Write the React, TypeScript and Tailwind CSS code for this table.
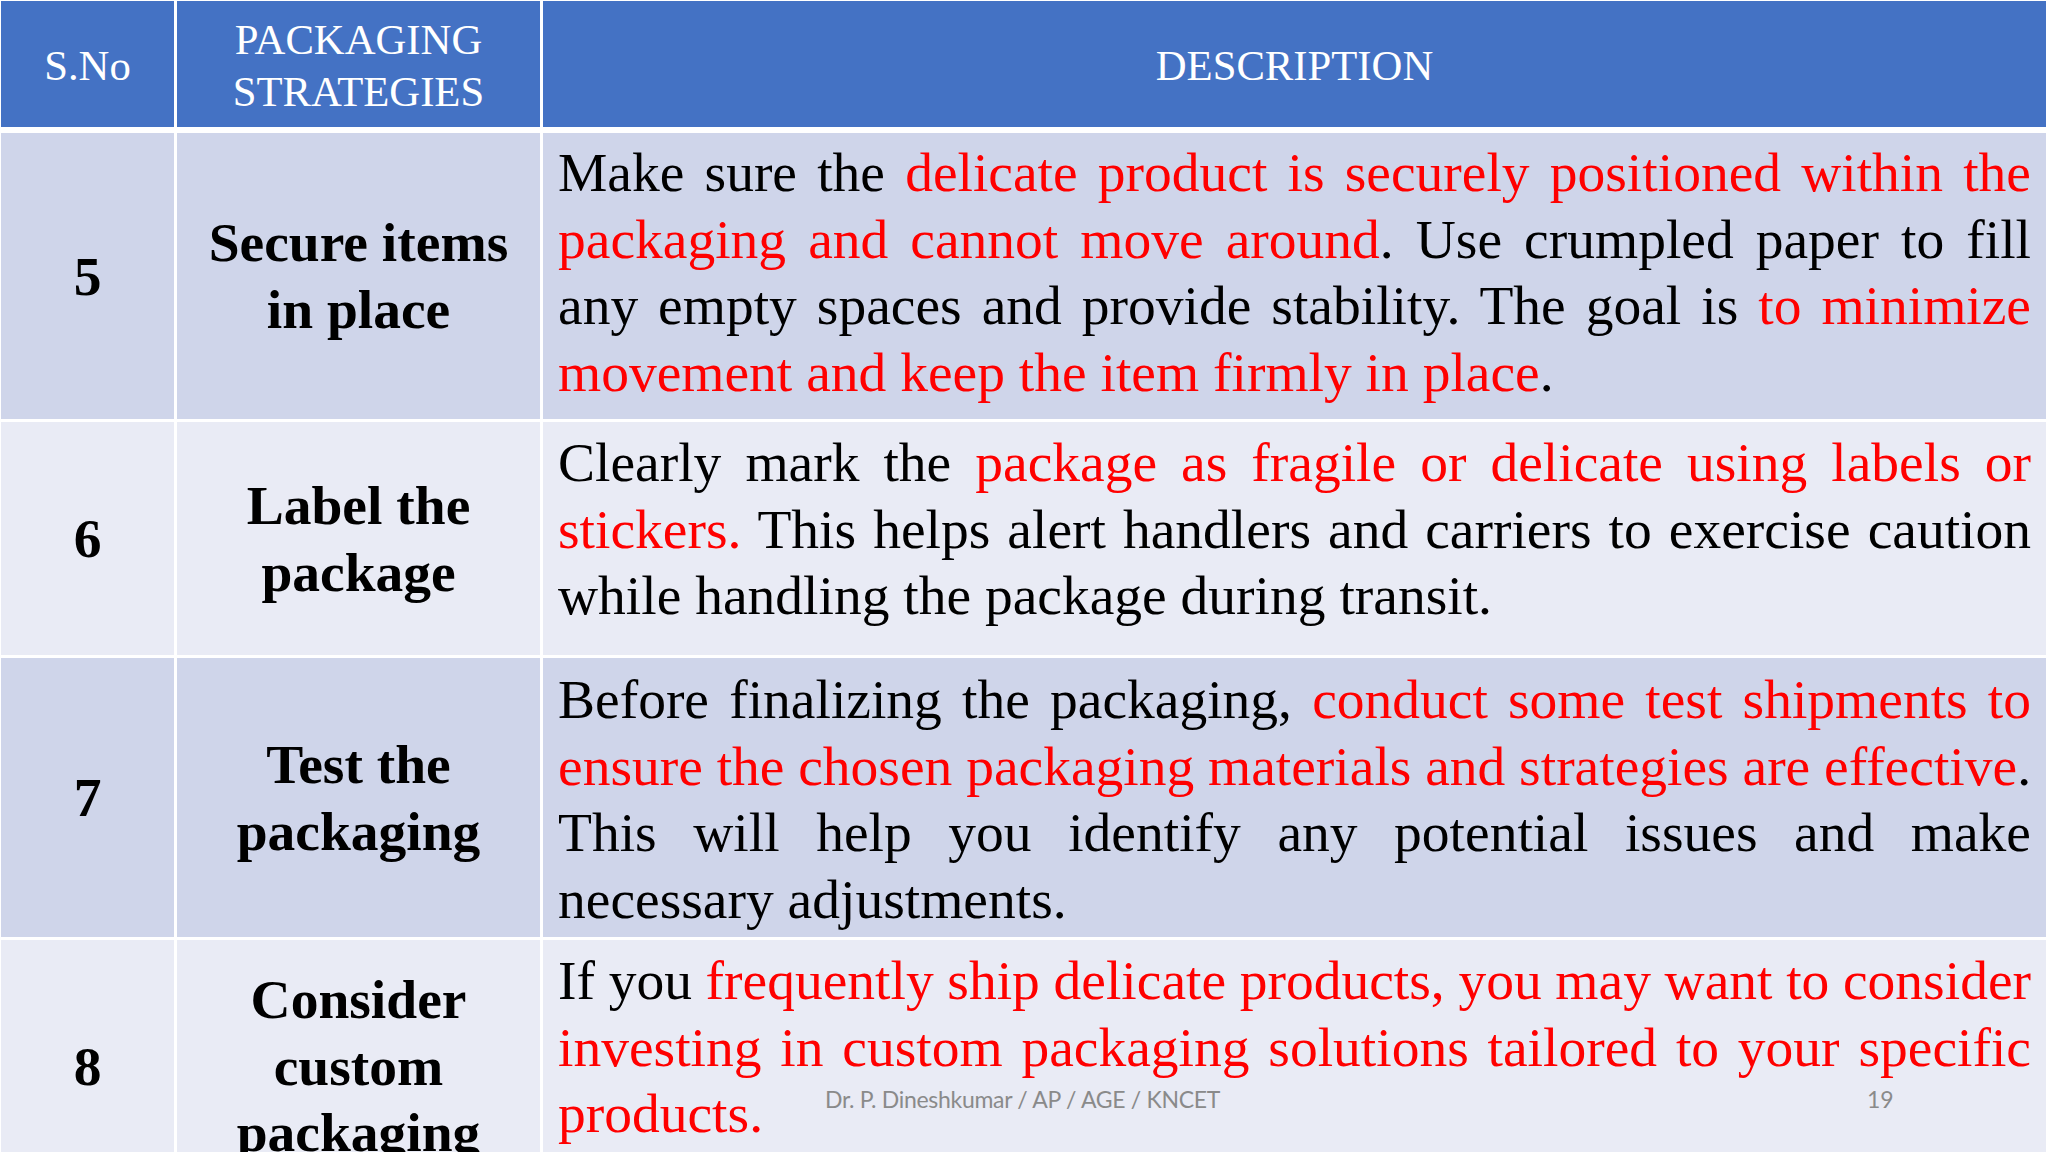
import React from "react";

// A run of text, red when highlighted
type Part = { text: string; red?: boolean };

// One row of the strategies table; description is given line by line
interface Row {
  no: string;
  title: string[];
  height: string;
  pad: string;
  bg: string;
  lines: Part[][];
}

const rows: Row[] = [
  {
    no: "5",
    title: ["Secure items", "in place"],
    height: "h-[286px]",
    pad: "pt-[7px]",
    bg: "bg-[#cfd5ea]",
    lines: [
      [{ text: "Make sure the " }, { text: "delicate product is securely positioned within the", red: true }],
      [{ text: "packaging and cannot move around", red: true }, { text: ". Use crumpled paper to fill" }],
      [{ text: "any empty spaces and provide stability. The goal is " }, { text: "to minimize", red: true }],
      [{ text: "movement and keep the item firmly in place", red: true }, { text: "." }],
    ],
  },
  {
    no: "6",
    title: ["Label the", "package"],
    height: "h-[233px]",
    pad: "pt-[8px]",
    bg: "bg-[#e9ebf5]",
    lines: [
      [{ text: "Clearly mark the " }, { text: "package as fragile or delicate using labels or", red: true }],
      [{ text: "stickers.", red: true }, { text: " This helps alert handlers and carriers to exercise caution" }],
      [{ text: "while handling the package during transit." }],
    ],
  },
  {
    no: "7",
    title: ["Test the", "packaging"],
    height: "h-[279px]",
    pad: "pt-[9px]",
    bg: "bg-[#cfd5ea]",
    lines: [
      [{ text: "Before finalizing the packaging, " }, { text: "conduct some test shipments to", red: true }],
      [{ text: "ensure the chosen packaging materials and strategies are effective", red: true }, { text: "." }],
      [{ text: "This will help you identify any potential issues and make" }],
      [{ text: "necessary adjustments." }],
    ],
  },
  {
    no: "8",
    title: ["Consider", "custom", "packaging"],
    height: "h-[252px]",
    pad: "pt-[8px]",
    bg: "bg-[#e9ebf5]",
    lines: [
      [{ text: "If you " }, { text: "frequently ship delicate products, you may want to consider", red: true }],
      [{ text: "investing in custom packaging solutions tailored to your specific", red: true }],
      [{ text: "products.", red: true }],
    ],
  },
];

const App: React.FC = () => {
  return (
    <div className="relative w-[2048px] h-[1152px] overflow-hidden bg-white [font-family:'Liberation_Serif',serif]">
      <div className="flex flex-col pl-[1px] pt-[1px] pr-[2px]">
        {/* Header */}
        <div className="grid grid-cols-[173px_363px_1fr] gap-x-[3px] h-[126px] text-white text-[42.7px] leading-[52px]">
          <div className="bg-[#4472c4] flex items-center justify-center pt-[4px]">S.No</div>
          <div className="bg-[#4472c4] flex items-center justify-center text-center pt-[3px]">
            PACKAGING
            <br />
            STRATEGIES
          </div>
          <div className="bg-[#4472c4] flex items-center justify-center pt-[4px]">DESCRIPTION</div>
        </div>

        {/* Body rows */}
        <div className="flex flex-col gap-y-[3px] mt-[6px]">
          {rows.map((row) => (
            <div
              key={row.no}
              className={`grid grid-cols-[173px_363px_1fr] gap-x-[3px] shrink-0 ${row.height} text-black text-[55.5px] leading-[66.7px]`}
            >
              <div className={`${row.bg} flex items-center justify-center font-bold pt-[2px]`}>{row.no}</div>
              <div className={`${row.bg} flex flex-col items-center justify-center font-bold text-center pt-[2px]`}>
                {row.title.map((t) => (
                  <span key={t}>{t}</span>
                ))}
              </div>
              <div className={`${row.bg} ${row.pad} pl-[15px] pr-[15px]`}>
                {row.lines.map((line, li) => {
                  const last = li === row.lines.length - 1;
                  return (
                    <div
                      key={li}
                      className={
                        last
                          ? "whitespace-nowrap text-left"
                          : "whitespace-nowrap text-justify [text-align-last:justify] [word-spacing:-8px]"
                      }
                    >
                      {line.map((p, i) => (
                        <span key={i} className={p.red ? "text-[#ff0000]" : ""}>
                          {p.text}
                        </span>
                      ))}
                    </div>
                  );
                })}
              </div>
            </div>
          ))}
        </div>
      </div>

      {/* Slide footer */}
      <div className="absolute left-[825px] top-[1084px] text-[23px] leading-[30px] text-[#8a8a8a] [font-family:Lato,sans-serif] tracking-[-0.3px]">
        Dr. P. Dineshkumar / AP / AGE / KNCET
      </div>
      <div className="absolute left-[1867px] top-[1084px] text-[23px] leading-[30px] text-[#8a8a8a] [font-family:Lato,sans-serif]">
        19
      </div>
    </div>
  );
};

export default App;
